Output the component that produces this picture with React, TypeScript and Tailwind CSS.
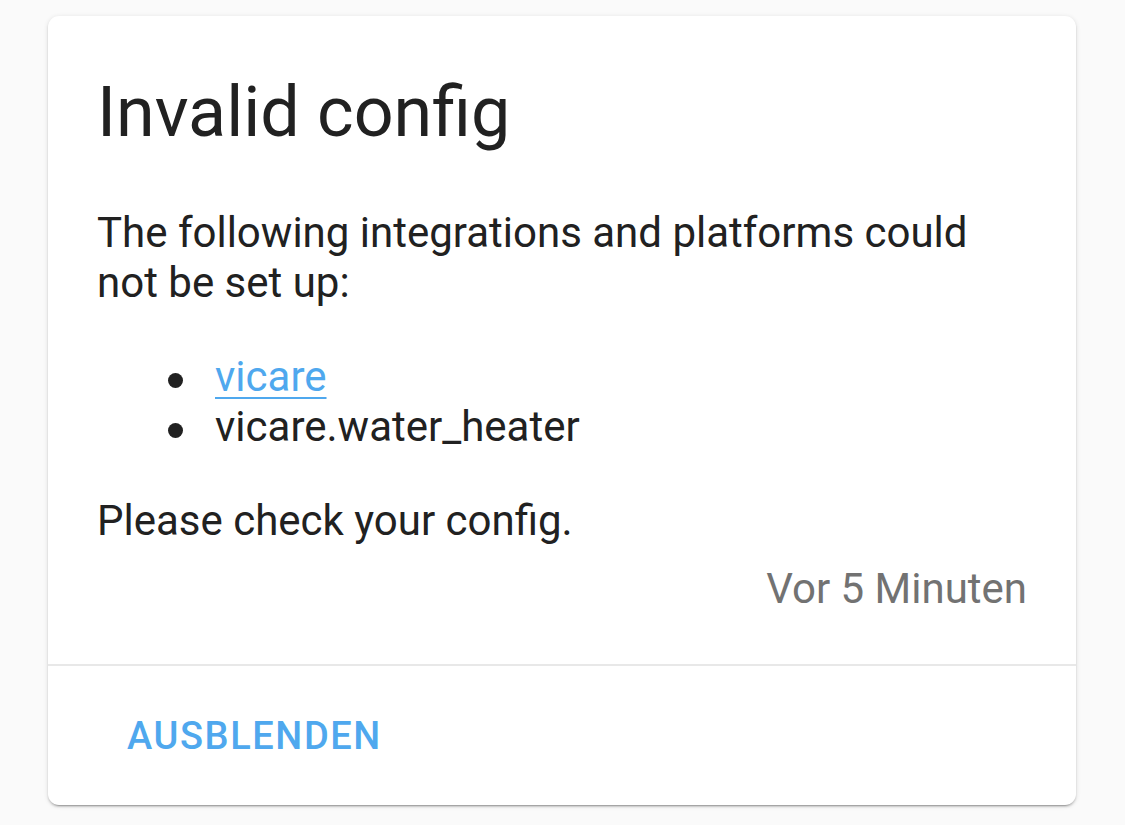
export default function App() {
  const items = [
    { label: "vicare", link: true },
    { label: "vicare.water_heater", link: false },
  ];

  return (
    <div
      className="min-h-[825px] bg-[#fafafa] px-[48px] pt-[16px] text-[#212121]"
      style={{ fontFamily: "Roboto, 'Noto Sans', sans-serif" }}
    >
      <div className="w-[1028px] rounded-[11px] bg-white shadow-[0_2px_2px_0_rgba(0,0,0,0.14),0_1px_5px_0_rgba(0,0,0,0.12),0_3px_1px_-2px_rgba(0,0,0,0.2)]">
        <div className="px-[49px] pt-[52px]">
          <h1 className="text-[70px] leading-[88px] font-normal">Invalid config</h1>

          <div className="mt-[52px] text-[42px] leading-[50px]">
            <p>The following integrations and platforms could not be set up:</p>
            <ul className="mt-[44px] pl-[71px]">
              {items.map((item) => (
                <li key={item.label} className="flex items-center">
                  <span className="mr-[32px] mt-[6px] h-[15px] w-[15px] rounded-full bg-[#212121]" />
                  {item.link ? (
                    <a href="#" className="text-[#4fa8ee] underline decoration-[2px] underline-offset-[6px]">
                      {item.label}
                    </a>
                  ) : (
                    <span>{item.label}</span>
                  )}
                </li>
              ))}
            </ul>
            <p className="mt-[44px]">Please check your config.</p>
          </div>

          <div className="mt-[18px] text-right text-[42px] leading-[50px] text-[#727272]">
            Vor 5 Minuten
          </div>
        </div>

        <div className="mt-[50px] border-t-2 border-[#e8e8e8] px-[79px] pt-[48px] pb-[46px]">
          <button className="text-[38px] leading-[45px] font-medium tracking-[1.6px] text-[#4fa8ee]">
            AUSBLENDEN
          </button>
        </div>
      </div>
    </div>
  );
}
